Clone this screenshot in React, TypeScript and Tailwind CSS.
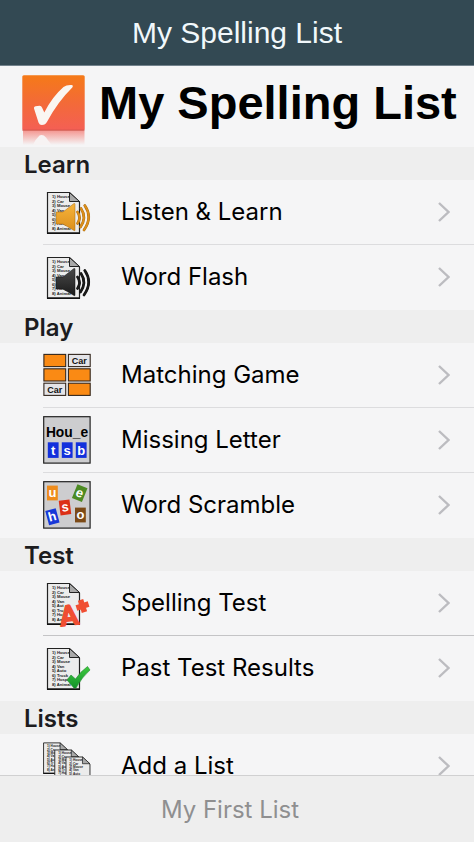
import React from 'react';

const words = ['House', 'Car', 'Mouse', 'Van', 'Auto', 'Truck', 'Hospi', 'Animal'];
const shortWords = ['House', 'Car', 'Mouse', 'Van', 'Aut', 'Tru', 'Ho', 'An'];
const coveredWords = ['House', 'Ca', 'Mo', 'Va', 'Au', 'Tr', 'Ho', 'An'];

/** Sheet of paper with a numbered word list, shared by several icons */
const WordSheet: React.FC<{ lines?: string[] }> = ({ lines = words }) => (
  <g>
    <path d="M4.5 4.5H26.5L36.5 14V45H4.5Z" fill="#ececec" stroke="#222" strokeWidth="1.2" />
    <path d="M26.5 4.5V13.5H36.5Z" fill="#a9a9a9" stroke="#222" strokeWidth="1" />
    <path d="M4 45.2H37" stroke="#111" strokeWidth="1.6" />
    {lines.map((word, i) => (
      <text
        key={i}
        x="9"
        y={10.2 + i * 4.5}
        fontSize="4.2"
        fontWeight="700"
        fill="#222"
        fontFamily="Liberation Sans, sans-serif"
      >
        {i + 1}) {word}
      </text>
    ))}
  </g>
);

const Icon: React.FC<{ children: React.ReactNode }> = ({ children }) => (
  <svg viewBox="0 0 48 48" className="size-12 shrink-0" aria-hidden="true">
    {children}
  </svg>
);

const SpeakerIcon: React.FC<{ id: string; from: string; to: string; edge: string }> = ({ id, from, to, edge }) => (
  <Icon>
    <defs>
      <linearGradient id={id} x1="0" y1="0" x2="0" y2="1">
        <stop offset="0" stopColor={from} />
        <stop offset="1" stopColor={to} />
      </linearGradient>
    </defs>
    <WordSheet />
    <path d="M13 24H20L31 15.5Q32 15 32 16.5V42Q32 43.3 31 42.5L20 36H13Z" fill={`url(#${id})`} stroke={edge} strokeWidth="0.5" />
    <g fill="none" strokeLinecap="round">
      <g stroke={edge} strokeWidth="2.7">
        <path d="M34.5 24Q38.5 29.5 34.5 35.5" />
        <path d="M38 20.5Q44 29.5 37.5 39" />
        <path d="M41.8 17.5Q50 29.5 41 42" />
      </g>
      <g stroke={to} strokeWidth="1.9">
        <path d="M34.5 24Q38.5 29.5 34.5 35.5" />
        <path d="M38 20.5Q44 29.5 37.5 39" />
        <path d="M41.8 17.5Q50 29.5 41 42" />
      </g>
    </g>
  </Icon>
);

const MatchingIcon: React.FC = () => (
  <Icon>
    {[0, 1, 2].map((row) =>
      [0, 1].map((col) => {
        const open = (row === 0 && col === 1) || (row === 2 && col === 0);
        const x = 0.9 + col * 24.5;
        const y = 3.4 + row * 14.4;
        return (
          <g key={`${row}-${col}`}>
            <rect x={x} y={y} width="21.8" height="12.2" fill={open ? '#e4e4e8' : '#fa8a14'} stroke="#33261c" strokeWidth="1.1" />
            {open && (
              <text x={x + 10.9} y={y + 9.3} textAnchor="middle" fontSize="9" fontWeight="700" fill="#111" fontFamily="Liberation Sans, sans-serif">
                Car
              </text>
            )}
          </g>
        );
      })
    )}
  </Icon>
);

const MissingIcon: React.FC = () => (
  <Icon>
    <rect x="0.7" y="0.7" width="46.4" height="46.4" fill="#cdcdcf" stroke="#222" strokeWidth="1.2" />
    <g fontFamily="Liberation Sans, sans-serif" fontWeight="700" textAnchor="middle">
      <text x="24" y="20.7" fontSize="13.8" fill="#000">Hou_e</text>
      {['t', 's', 'b'].map((letter, i) => (
        <g key={letter}>
          <rect x={4.8 + i * 14} y="26.3" width="10.8" height="15.6" fill="#1230dc" />
          <text x={10.2 + i * 14} y="38.7" fontSize="13" fill="#fff">{letter}</text>
        </g>
      ))}
    </g>
  </Icon>
);

const tiles = [
  { letter: 'u', x: 9.4, y: 12, angle: 0, color: '#ee8c1c' },
  { letter: 'e', x: 36.7, y: 12.2, angle: 22, color: '#4c8a22' },
  { letter: 's', x: 22, y: 26.4, angle: -7, color: '#dc2f16' },
  { letter: 'h', x: 9.4, y: 35.8, angle: -15, color: '#1838d8' },
  { letter: 'o', x: 37.4, y: 34, angle: 0, color: '#7c4a16' },
];

const ScrambleIcon: React.FC = () => (
  <Icon>
    <rect x="0.7" y="0.7" width="46.4" height="46.4" fill="#cdcdcf" stroke="#222" strokeWidth="1.2" />
    {tiles.map((tile) => (
      <g key={tile.letter} transform={`translate(${tile.x} ${tile.y}) rotate(${tile.angle})`}>
        <rect x="-5.4" y="-7.4" width="10.8" height="14.8" fill={tile.color} />
        <text y="4" textAnchor="middle" fontSize="13" fontWeight="700" fill="#fff" fontFamily="Liberation Sans, sans-serif">
          {tile.letter}
        </text>
      </g>
    ))}
  </Icon>
);

const GradeIcon: React.FC = () => (
  <Icon>
    <WordSheet lines={shortWords} />
    <g transform="translate(27 46) rotate(-7)">
      <text
        textAnchor="middle"
        fontSize="28"
        fontWeight="700"
        fill="#f04e32"
        stroke="#f04e32"
        strokeWidth="1.4"
        strokeLinejoin="round"
        fontFamily="Liberation Sans Narrow, Roboto, sans-serif"
      >
        A
      </text>
    </g>
    <g transform="translate(39.5 27) rotate(-18)" stroke="#f04e32" strokeWidth="5.6" strokeLinecap="square">
      <path d="M0 -3.6V3.6M-3.6 0H3.6" />
    </g>
  </Icon>
);

const ResultsIcon: React.FC = () => (
  <Icon>
    <defs>
      <linearGradient id="tick" x1="0" y1="0" x2="0" y2="1">
        <stop offset="0" stopColor="#3fc93f" />
        <stop offset="1" stopColor="#12932a" />
      </linearGradient>
    </defs>
    <WordSheet />
    <path d="M24 36L28 31L32.5 35Q37.5 27.5 44.5 22.5L47 26Q39 33 33 44H31Z" fill="url(#tick)" stroke="#1c8a2c" strokeWidth="0.6" strokeLinejoin="round" />
  </Icon>
);

const SheetsIcon: React.FC = () => (
  <Icon>
    <g transform="translate(-2.8 -2.5) scale(0.75)">
      <WordSheet lines={coveredWords} />
    </g>
    <g transform="translate(8.4 4.6) scale(0.75)">
      <WordSheet lines={coveredWords} />
    </g>
    <g transform="translate(19.6 11.6) scale(0.75)">
      <WordSheet />
    </g>
  </Icon>
);

const sections = [
  {
    title: 'Learn',
    divider: 'border-[#dcdcde]',
    items: [
      { label: 'Listen & Learn', icon: <SpeakerIcon id="gold" from="#f6b43c" to="#dc8f1c" edge="#a8690c" /> },
      { label: 'Word Flash', icon: <SpeakerIcon id="black" from="#4a4a4a" to="#1a1a1a" edge="#111111" /> },
    ],
  },
  {
    title: 'Play',
    divider: 'border-[#dcdcde]',
    items: [
      { label: 'Matching Game', icon: <MatchingIcon /> },
      { label: 'Missing Letter', icon: <MissingIcon /> },
      { label: 'Word Scramble', icon: <ScrambleIcon /> },
    ],
  },
  {
    title: 'Test',
    divider: 'border-[#c4c4c6]',
    items: [
      { label: 'Spelling Test', icon: <GradeIcon /> },
      { label: 'Past Test Results', icon: <ResultsIcon /> },
    ],
  },
  {
    title: 'Lists',
    divider: 'border-[#dcdcde]',
    items: [{ label: 'Add a List', icon: <SheetsIcon /> }],
  },
];

const Logo: React.FC = () => (
  <svg viewBox="7 10 63 71" className="h-[71px] w-[63px] shrink-0" aria-hidden="true">
    <defs>
      <linearGradient id="logo" x1="0" y1="0" x2="0" y2="1">
        <stop offset="0" stopColor="#f57a18" />
        <stop offset="0.5" stopColor="#f36a38" />
        <stop offset="1" stopColor="#f45f55" />
      </linearGradient>
      <linearGradient id="mirror" x1="0" y1="0" x2="0" y2="1">
        <stop offset="0" stopColor="#f45f55" stopOpacity="0.6" />
        <stop offset="1" stopColor="#f45f55" stopOpacity="0" />
      </linearGradient>
    </defs>
    <rect x="7.3" y="10.3" width="62.4" height="55.2" rx="1.5" fill="url(#logo)" />
    <path d="M7.5 65.2H69.5" stroke="#cf5348" strokeWidth="1" />
    <path
      d="M19 43.5Q18.5 41.8 20.5 41.3L24.5 40.8Q26.3 40.7 27 42.5L29.3 47.5Q37 32 48.5 22Q51.5 19.8 56.5 20.1Q58.7 20.5 57.3 22.5Q43 36.5 32.2 56.5Q30.5 60 26.8 60Q24.5 60 23.5 57.5Z"
      fill="#faf6f2"
    />
    <rect x="8" y="66" width="61.5" height="14" fill="url(#mirror)" />
    <path d="M18 80Q20.5 74 24.5 70.5Q28 69 31 72.5L36.5 80Z" fill="#f7f3f3" />
  </svg>
);

const App: React.FC = () => {
  return (
    <div className="flex h-screen flex-col bg-[#f5f5f6] font-['Inter',sans-serif] text-black">
      <header className="flex h-[66px] shrink-0 items-center justify-center border-b border-[#72828c] bg-[#334953] font-['Liberation_Sans',sans-serif] text-[30px] text-[#f1f8fb]">
        My Spelling List
      </header>

      <main className="min-h-0 flex-1 overflow-hidden">
        <div className="flex h-[81px] items-start gap-3.5 pt-[9px] pl-[22px]">
          <Logo />
          <h1 className="font-['Liberation_Sans',sans-serif] text-[47px] leading-[56px] font-bold whitespace-nowrap">
            My Spelling List
          </h1>
        </div>

        {sections.map((section) => (
          <section key={section.title}>
            <h2 className="flex h-[33px] items-center bg-[#eeeeee] pt-0.5 pl-6 text-[24px] font-semibold text-[#1c1c1e]">
              {section.title}
            </h2>
            <ul>
              {section.items.map((item, index) => (
                <li key={item.label} className="pl-[43px]">
                  <button
                    type="button"
                    className={`flex h-[65px] w-full items-center border-b pr-6 text-left ${
                      index < section.items.length - 1 ? section.divider : 'border-transparent'
                    }`}
                  >
                    {item.icon}
                    <span className="ml-[30px] flex-1 text-[24px] whitespace-nowrap">{item.label}</span>
                    <svg viewBox="0 0 12 20" className="h-5 w-3" fill="none" stroke="#bcbcc0" strokeWidth="2.4" aria-hidden="true">
                      <path d="M1 1L10.5 10L1 19" />
                    </svg>
                  </button>
                </li>
              ))}
            </ul>
          </section>
        ))}
      </main>

      <footer className="flex h-[67px] shrink-0 items-center justify-center border-t border-[#d0d0d1] bg-[#eeeeee] pt-0.5 pr-3.5 text-[24px] text-[#8f8f90]">
        My First List
      </footer>
    </div>
  );
};

export default App;
